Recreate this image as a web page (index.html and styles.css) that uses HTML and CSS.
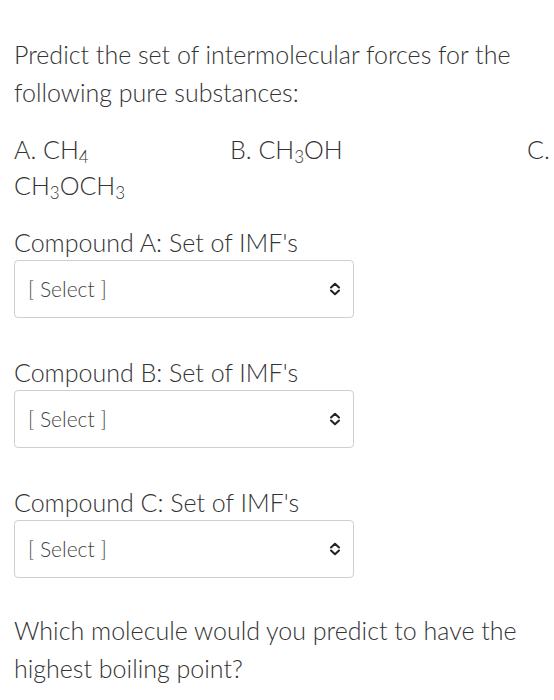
FILE: index.html
```html
<!DOCTYPE html>
<html>
<head>
<meta charset="utf-8">
<link rel="stylesheet" href="styles.css">
</head>
<body>
<div class="page">
  <p class="intro">Predict the set of intermolecular forces for the following pure substances:</p>
  <p class="compounds"><span class="cmp cmp-a">A. CH<sub>4</sub></span><span class="cmp cmp-b">B. CH<sub>3</sub>OH</span>C. CH<sub>3</sub>OCH<sub>3</sub></p>

  <div class="field">
    <div class="label">Compound A: Set of IMF's</div>
    <div class="select"><span>[ Select ]</span>
      <svg class="chev" width="12" height="14" viewBox="0 0 12 14"><path d="M2 5.5 L6 1.8 L10 5.5 M2 8.5 L6 12.2 L10 8.5" fill="none" stroke="#222" stroke-width="2" stroke-linecap="round" stroke-linejoin="round"/></svg>
    </div>
  </div>

  <div class="field">
    <div class="label">Compound B: Set of IMF's</div>
    <div class="select"><span>[ Select ]</span>
      <svg class="chev" width="12" height="14" viewBox="0 0 12 14"><path d="M2 5.5 L6 1.8 L10 5.5 M2 8.5 L6 12.2 L10 8.5" fill="none" stroke="#222" stroke-width="2" stroke-linecap="round" stroke-linejoin="round"/></svg>
    </div>
  </div>

  <div class="field last">
    <div class="label">Compound C: Set of IMF's</div>
    <div class="select"><span>[ Select ]</span>
      <svg class="chev" width="12" height="14" viewBox="0 0 12 14"><path d="M2 5.5 L6 1.8 L10 5.5 M2 8.5 L6 12.2 L10 8.5" fill="none" stroke="#222" stroke-width="2" stroke-linecap="round" stroke-linejoin="round"/></svg>
    </div>
  </div>

  <p class="question">Which molecule would you predict to have the highest boiling point?</p>
</div>
</body>
</html>
```

FILE: styles.css
```css
html, body {
  margin: 0;
  padding: 0;
  background: #fff;
}
body {
  font-family: "Lato", "Liberation Sans", sans-serif;
  font-weight: 300;
  color: #333;
}
.page {
  padding: 35px 0 0 14px;
  font-size: 25px;
  line-height: 38px;
}
p {
  margin: 0;
}
.intro {
  margin-bottom: 20px;
}
.compounds {
  line-height: 36px;
  margin-bottom: 21px;
}
sub {
  font-size: 0.68em;
  vertical-align: -0.25em;
  line-height: 0;
}
.cmp {
  display: inline-block;
}
.cmp-a { width: 216px; }
.cmp-b { width: 297px; }
.field {
  margin-bottom: 36px;
}
.field.last {
  margin-bottom: 33px;
}
.label {
  line-height: 36px;
}
.select {
  box-sizing: border-box;
  width: 340px;
  height: 58px;
  border: 1px solid #cfcfcf;
  border-radius: 4px;
  display: flex;
  align-items: center;
  justify-content: space-between;
  padding: 0 12px 0 13px;
  font-size: 21px;
  color: #444;
}
```
